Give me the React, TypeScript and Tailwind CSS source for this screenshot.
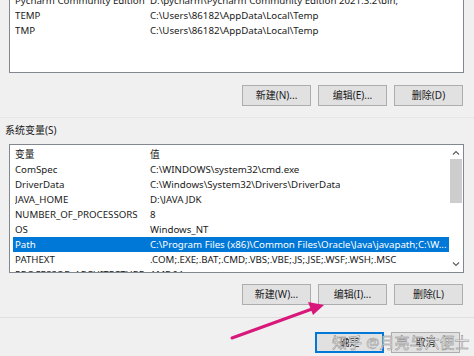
import React from 'react';

const font = { fontFamily: '"Noto Sans", "Noto Sans CJK SC", sans-serif' };

const userVars = [
  { name: 'Pycharm Community Edition', value: 'D:\\pycharm\\Pycharm Community Edition 2021.3.2\\bin;' },
  { name: 'TEMP', value: 'C:\\Users\\86182\\AppData\\Local\\Temp' },
  { name: 'TMP', value: 'C:\\Users\\86182\\AppData\\Local\\Temp' },
];

const sysVars = [
  { name: 'ComSpec', value: 'C:\\WINDOWS\\system32\\cmd.exe' },
  { name: 'DriverData', value: 'C:\\Windows\\System32\\Drivers\\DriverData' },
  { name: 'JAVA_HOME', value: 'D:\\JAVA JDK' },
  { name: 'NUMBER_OF_PROCESSORS', value: '8' },
  { name: 'OS', value: 'Windows_NT' },
  { name: 'Path', value: 'C:\\Program Files (x86)\\Common Files\\Oracle\\Java\\javapath;C:\\W...', selected: true },
  { name: 'PATHEXT', value: '.COM;.EXE;.BAT;.CMD;.VBS;.VBE;.JS;.JSE;.WSF;.WSH;.MSC' },
  { name: 'PROCESSOR_ARCHITECTURE', value: 'AMD64' },
];

const Row: React.FC<{ name: string; value: string; selected?: boolean }> = ({ name, value, selected }) => (
  <div
    className={`flex h-[15px] items-center px-[2px] text-[9.7px] leading-[15px] whitespace-nowrap ${
      selected ? 'bg-[#0078d7] text-white' : 'text-[#1a1a1a]'
    }`}
  >
    <span className="w-[135px] shrink-0 overflow-hidden">{name}</span>
    <span>{value}</span>
  </div>
);

const Btn: React.FC<{ label: string; primary?: boolean }> = ({ label, primary }) => (
  <div
    className={`flex h-[21px] w-[69px] items-center justify-center bg-[#e1e1e1] text-[10px] text-[#1a1a1a] ${
      primary ? 'border-2 border-[#0078d7]' : 'border border-[#adadad]'
    }`}
  >
    {label}
  </div>
);

export default function App() {
  return (
    <div className="relative h-[356px] w-[474px] overflow-hidden bg-[#f0f0f0]" style={font}>
      {/* user variables list */}
      <div className="-mt-[8px] ml-[9px] h-[81px] w-[455px] overflow-hidden border border-[#828790] bg-white pl-[3px]">
        {userVars.map((v) => (
          <Row key={v.name} name={v.name} value={v.value} />
        ))}
      </div>

      <div className="mt-[12px] flex justify-end gap-[7px] pr-[11px]">
        <Btn label="新建(N)..." />
        <Btn label="编辑(E)..." />
        <Btn label="删除(D)" />
      </div>

      <div className="mt-[11px] h-px bg-[#e6e6e6]" />

      <div className="mt-[5px] pl-[5px] text-[10px] leading-[15px] text-[#1a1a1a]">系统变量(S)</div>

      {/* system variables list */}
      <div className="mt-[6px] ml-[9px] flex h-[129px] w-[455px] border border-[#828790] bg-white">
        <div className="flex-1 overflow-hidden pl-[3px] pt-[2px]">
          <Row name="变量" value="值" />
          {sysVars.map((v) => (
            <Row key={v.name} name={v.name} value={v.value} selected={v.selected} />
          ))}
        </div>
        <div className="flex w-[14px] flex-col items-center bg-white">
          <svg width="10" height="10" viewBox="0 0 10 10" className="mt-[3px]">
            <path d="M2 6.5 L5 3.5 L8 6.5" fill="none" stroke="#606060" strokeWidth="1.2" />
          </svg>
          <div className="mt-[1px] h-[44px] w-[12px] bg-[#cdcdcd]" />
          <div className="flex-1" />
          <svg width="10" height="10" viewBox="0 0 10 10" className="mb-[3px]">
            <path d="M2 3.5 L5 6.5 L8 3.5" fill="none" stroke="#606060" strokeWidth="1.2" />
          </svg>
        </div>
      </div>

      <div className="mt-[11px] flex justify-end gap-[7px] pr-[11px]">
        <Btn label="新建(W)..." />
        <Btn label="编辑(I)..." />
        <Btn label="删除(L)" />
      </div>

      <div className="mt-[12px] h-px bg-[#dfdfdf]" />

      <div className="mt-[14px] flex justify-end gap-[7px] pr-[14px]">
        <Btn label="确定" primary />
        <Btn label="取消" />
      </div>

      {/* annotation arrow */}
      <svg className="absolute left-0 top-0" width="474" height="356" viewBox="0 0 474 356">
        <line x1="232" y1="338" x2="312" y2="309" stroke="#d8187a" strokeWidth="3" strokeLinecap="round" />
        <path d="M324 305 L308 302 L313 315 Z" fill="#d8187a" />
      </svg>

      {/* watermark */}
      <div
        className="absolute left-[332px] top-[333px] text-[15px] leading-[18px] text-white/80 whitespace-nowrap"
        style={{ WebkitTextStroke: '0.5px #8a8a8a' }}
      >
        知乎 @月亮与六便士
      </div>
    </div>
  );
}
